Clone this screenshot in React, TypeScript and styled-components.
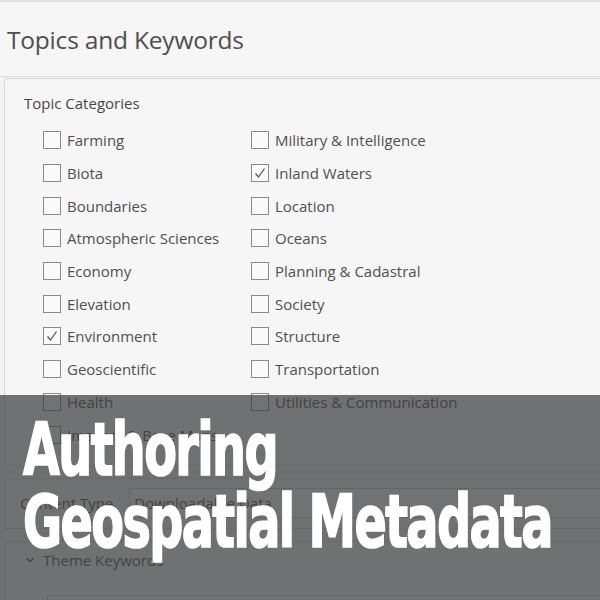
import { FC } from "react";
import styled, { createGlobalStyle } from "styled-components";

const GlobalStyle = createGlobalStyle`
  html, body {
    margin: 0;
    padding: 0;
    background: #f4f4f4;
  }
`;

const SPage = styled.div`
  position: relative;
  width: 600px;
  height: 600px;
  overflow: hidden;
  background: #f4f4f4;
  border-top: 2px solid #e2e2e2;
  box-sizing: border-box;
  font-family: "Open Sans", "Noto Sans", sans-serif;
  color: #555;
`;

const SHeader = styled.div`
  height: 75px;
  padding-left: 7px;
  display: flex;
  align-items: center;
  border-bottom: 1px solid #dcdcdc;
  box-sizing: border-box;
  background: #f6f6f6;
`;

const STitle = styled.h1`
  margin: 0;
  font-size: 24.5px;
  font-weight: 400;
  color: #4e4e4e;
  letter-spacing: -0.2px;
`;

const SPanel = styled.div<{ pad?: string }>`
  margin: 0 0 12px 4px;
  border: 1px solid #d6d6d6;
  border-right: none;
  border-radius: 3px 0 0 3px;
  padding: ${(p) => p.pad ?? "14px 0 10px 19px"};
  background: #f6f6f6;
`;

const SFirstPanel = styled(SPanel)`
  margin-top: 1px;
  height: 388px;
  box-sizing: border-box;
`;

const SSectionTitle = styled.div`
  font-size: 15px;
  color: #474747;
  margin-bottom: 11px;
`;

const SGrid = styled.div`
  display: grid;
  grid-template-columns: 208px 1fr;
  grid-auto-rows: 32.7px;
  margin-left: 19px;
`;

const SItem = styled.label`
  display: flex;
  align-items: center;
  gap: 6px;
  font-size: 15px;
  color: #505050;
`;

const SBox = styled.span`
  width: 16px;
  height: 16px;
  border: 1px solid #8a8a8a;
  background: #fafafa;
  display: flex;
  align-items: center;
  justify-content: center;
  flex-shrink: 0;
`;

const SRow = styled.div`
  display: flex;
  align-items: center;
  gap: 16px;
  font-size: 15px;
`;

const SInput = styled.div<{ indent?: number }>`
  flex: 1;
  height: 28px;
  margin-left: ${(p) => p.indent ?? 0}px;
  border: 1px solid #c8c8c8;
  border-right: none;
  background: #fbfbfb;
  display: flex;
  align-items: center;
  padding-left: 4px;
  color: #555;
`;

const SExpander = styled.div`
  display: flex;
  align-items: center;
  gap: 8px;
  font-size: 15px;
  color: #555;
  margin-bottom: 25px;
`;

const SOverlay = styled.div`
  position: absolute;
  left: 0;
  right: 0;
  top: 393px;
  bottom: 0;
  background: rgba(60, 61, 64, 0.72);
  padding: 20px 0 0 23px;
  box-sizing: border-box;
`;

const SBanner = styled.div`
  font-family: "DejaVu Sans Condensed", "DejaVu Sans", sans-serif;
  font-weight: 700;
  color: #ffffff;
  font-size: 53px;
  line-height: 72px;
  letter-spacing: -1.6px;
  -webkit-text-stroke: 1.2px #ffffff;
  white-space: nowrap;
`;

const SBannerLine = styled.span`
  display: block;
  transform-origin: left center;
  transform: scale(1, 1.36);
`;

type CheckProps = { label: string; checked?: boolean };

const Check: FC<CheckProps> = ({ label, checked }) => (
  <SItem>
    <SBox>
      {checked && (
        <svg width="14" height="14" viewBox="0 0 14 14">
          <path d="M2.5 7.5 L5.5 11 L11.5 2.5" fill="none" stroke="#555" strokeWidth="1.3" />
        </svg>
      )}
    </SBox>
    {label}
  </SItem>
);

const left = [
  "Farming",
  "Biota",
  "Boundaries",
  "Atmospheric Sciences",
  "Economy",
  "Elevation",
  "Environment",
  "Geoscientific",
  "Health",
  "Imagery & Base Maps",
];
const right = [
  "Military & Intelligence",
  "Inland Waters",
  "Location",
  "Oceans",
  "Planning & Cadastral",
  "Society",
  "Structure",
  "Transportation",
  "Utilities & Communication",
  "",
];
const checkedSet = new Set(["Inland Waters", "Environment"]);

export default function App() {
  const cells: string[] = [];
  left.forEach((l, i) => {
    cells.push(l);
    cells.push(right[i]);
  });

  return (
    <SPage>
      <GlobalStyle />
      <SHeader>
        <STitle>Topics and Keywords</STitle>
      </SHeader>
      <SFirstPanel>
        <SSectionTitle>Topic Categories</SSectionTitle>
        <SGrid>
          {cells.map((c, i) =>
            c ? <Check key={i} label={c} checked={checkedSet.has(c)} /> : <span key={i} />
          )}
        </SGrid>
      </SFirstPanel>
      <SPanel pad="9px 0 10px 15px">
        <SRow>
          <span>Content Type</span>
          <SInput>Downloadable Data</SInput>
        </SRow>
      </SPanel>
      <SPanel pad="8px 0 10px 20px">
        <SExpander>
          <svg width="10" height="10" viewBox="0 0 10 10">
            <path d="M1.5 3 L5 6.5 L8.5 3" fill="none" stroke="#555" strokeWidth="1.4" />
          </svg>
          Theme Keywords
        </SExpander>
        <SInput indent={22} />
      </SPanel>
      <SOverlay>
        <SBanner>
          <SBannerLine>Authoring</SBannerLine>
          <SBannerLine>Geospatial Metadata</SBannerLine>
        </SBanner>
      </SOverlay>
    </SPage>
  );
}
